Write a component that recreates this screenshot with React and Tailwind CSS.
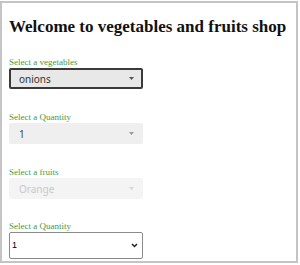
function Caret({ color }) {
  return (
    <svg width="5" height="3" viewBox="0 0 5 3" className="shrink-0">
      <path d="M0 0 L5 0 L2.5 3 Z" fill={color} />
    </svg>
  );
}

function FakeSelect({ value, className, textClass, caret }) {
  return (
    <div className={`w-[134px] h-[21px] flex items-center justify-between ${className}`}>
      <span className={`text-[10px] leading-none ${textClass}`} style={{ fontFamily: '"Noto Sans", "Open Sans", sans-serif' }}>
        {value}
      </span>
      <Caret color={caret} />
    </div>
  );
}

function Label({ children }) {
  return (
    <div className="text-[9px] leading-[11px] text-[#3f9a3f] whitespace-nowrap" style={{ fontFamily: '"Liberation Serif", serif' }}>
      {children}
    </div>
  );
}

export default function App() {
  return (
    <div className="w-[300px] h-[265px] bg-white">
      <div className="mt-px w-[298px] h-[262px] border-2 border-[#c4c4c4] pl-[7px] pt-[14px]">
        <h1
          className="text-[17px] leading-[20px] font-bold text-[#111] whitespace-nowrap"
          style={{ fontFamily: '"Liberation Serif", serif' }}
        >
          Welcome to vegetables and fruits shop
        </h1>

        <div className="mt-[20px]">
          <Label>Select a vegetables</Label>
          <FakeSelect
            value="onions"
            className="bg-[#e8e8e8] border-2 border-[#3a3a3a] rounded-[2px] pl-[8px] pr-[7px]"
            textClass="text-[#333]"
            caret="#555"
          />
        </div>

        <div className="mt-[23px]">
          <Label>Select a Quantity</Label>
          <FakeSelect
            value="1"
            className="bg-[#efefef] rounded-[2px] pl-[10px] pr-[9px]"
            textClass="text-[#444]"
            caret="#999"
          />
        </div>

        <div className="mt-[23px]">
          <Label>Select a fruits</Label>
          <FakeSelect
            value="Orange"
            className="bg-[#f4f4f4] rounded-[2px] pl-[10px] pr-[9px]"
            textClass="text-[#c9c9c9]"
            caret="#d6d6d6"
          />
        </div>

        <div className="mt-[22px]">
          <Label>Select a Quantity</Label>
          <div className="w-[134px] h-[27px] bg-white border border-[#8a8a8a] rounded-[2px] flex items-center justify-between pl-[2px] pr-[4px]">
            <span className="text-[9px] leading-none text-black" style={{ fontFamily: '"Liberation Sans", sans-serif' }}>
              1
            </span>
            <svg width="7" height="5" viewBox="0 0 7 5">
              <path d="M1 1 L3.5 3.5 L6 1" fill="none" stroke="#222" strokeWidth="1.5" />
            </svg>
          </div>
        </div>
      </div>
    </div>
  );
}
